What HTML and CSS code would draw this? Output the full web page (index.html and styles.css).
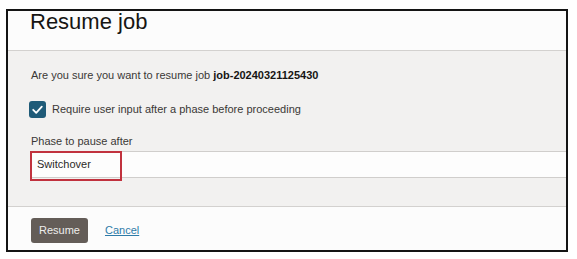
FILE: index.html
```html
<!DOCTYPE html>
<html lang="en">
<head>
<meta charset="utf-8">
<title>Resume job</title>
<link rel="stylesheet" href="styles.css">
</head>
<body>
<div class="dialog">
  <div class="dialog-header">
    <h1 class="dialog-title">Resume job</h1>
  </div>
  <div class="dialog-body">
    <p class="confirm-text">Are you sure you want to resume job <strong>job-20240321125430</strong></p>
    <label class="check-row">
      <span class="checkbox">
        <svg viewBox="0 0 17 17" width="17" height="17" aria-hidden="true">
          <polyline points="4.2,8.8 7.2,11.8 12.8,5.6" fill="none" stroke="#ffffff" stroke-width="1.8" stroke-linecap="round" stroke-linejoin="round"/>
        </svg>
      </span>
      <span class="check-label">Require user input after a phase before proceeding</span>
    </label>
    <div class="field-label">Phase to pause after</div>
    <div class="field">
      <span class="field-value">Switchover</span>
      <span class="highlight"></span>
    </div>
  </div>
  <div class="dialog-footer">
    <button class="btn-primary" type="button">Resume</button>
    <a class="link" href="#">Cancel</a>
  </div>
</div>
</body>
</html>
```

FILE: styles.css
```css
html, body {
  margin: 0;
  padding: 0;
  background: #ffffff;
}

body {
  font-family: "Liberation Sans", Arial, sans-serif;
  font-size: 11px;
  line-height: 13px;
  color: #3a3836;
}

.dialog {
  box-sizing: border-box;
  width: 562px;
  height: 243px;
  margin: 9px 0 0 6px;
  border: 2px solid #141414;
  display: flex;
  flex-direction: column;
  background: #fcfcfc;
}

.dialog-header {
  box-sizing: border-box;
  height: 40px;
  padding: 1px 0 0 22px;
  border-bottom: 1px solid #d3d1cf;
  background: #fcfcfc;
}

.dialog-title {
  margin: 0;
  font-size: 22px;
  line-height: 20px;
  font-weight: normal;
  color: #161513;
}

.dialog-body {
  box-sizing: border-box;
  height: 155px;
  padding: 18px 0 0 23px;
  background: #f2f1f0;
  display: flex;
  flex-direction: column;
}

.confirm-text {
  margin: 0;
  color: #3a3836;
}

.confirm-text strong {
  color: #161513;
}

.check-row {
  margin-top: 19px;
  margin-left: -2px;
  display: flex;
  align-items: center;
  gap: 6px;
  height: 17px;
}

.checkbox {
  width: 17px;
  height: 17px;
  border-radius: 3px;
  background: #1f5b78;
  display: flex;
}

.check-label {
  color: #3a3836;
}

.field-label {
  margin-top: 17px;
  color: #3a3836;
}

.field {
  position: relative;
  box-sizing: border-box;
  margin-top: 3px;
  height: 27px;
  border-top: 1px solid #d0cecc;
  border-bottom: 1px solid #d0cecc;
  background: #fdfdfd;
  display: flex;
  align-items: center;
  padding-left: 6px;
}

.field-value {
  color: #2c2a28;
}

.highlight {
  position: absolute;
  left: -1px;
  top: -1px;
  width: 92px;
  height: 30px;
  box-sizing: border-box;
  border: 2px solid #c1323e;
}

.dialog-footer {
  flex: 1;
  border-top: 1px solid #d3d1cf;
  background: #fcfcfc;
  display: flex;
  align-items: flex-start;
  gap: 17px;
  padding: 11px 0 0 23px;
}

.btn-primary {
  box-sizing: border-box;
  height: 25px;
  padding: 0 8px;
  border: none;
  border-radius: 3px;
  background: #645d58;
  color: #efeeed;
  font-family: "Liberation Sans", Arial, sans-serif;
  font-size: 11px;
  line-height: 13px;
}

.link {
  margin-top: 6px;
  color: #2e7ba8;
  text-decoration: underline;
}
```
